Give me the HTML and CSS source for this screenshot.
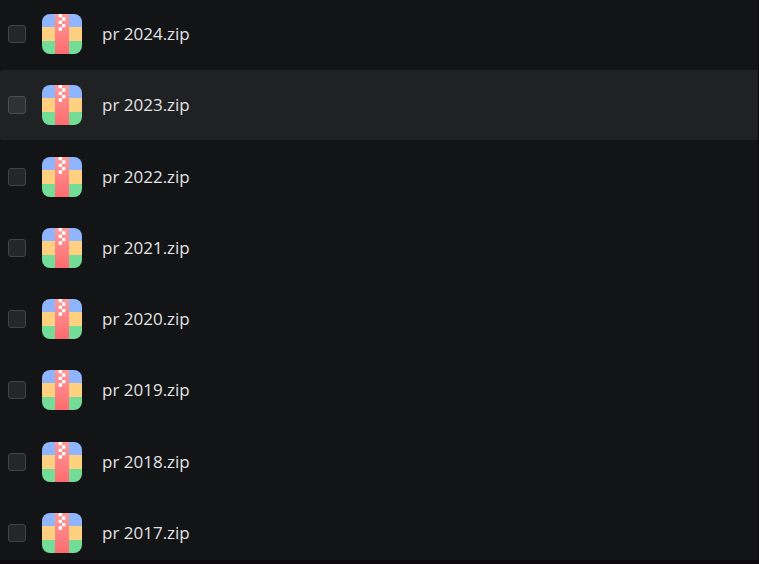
FILE: index.html
```
<!DOCTYPE html>
<html lang="en">
<head>
<meta charset="utf-8">
<title>Files</title>
<link rel="stylesheet" href="styles.css">
</head>
<body>
<svg class="sprite" aria-hidden="true">
  <defs>
    <linearGradient id="zip-band" x1="0" y1="0" x2="0" y2="1">
      <stop offset="0" stop-color="#ff9a9a"/>
      <stop offset="1" stop-color="#ff6b6e"/>
    </linearGradient>
    <clipPath id="zip-clip"><rect width="120" height="120" rx="24"/></clipPath>
  </defs>
  <symbol id="zip" viewBox="0 0 120 120">
    <g clip-path="url(#zip-clip)">
      <path fill="#8fb5ff" d="M0 0h120v40H0z"/>
      <path fill="#ffd080" d="M0 39h120v42H0z"/>
      <path fill="#73dc97" d="M0 81h120v39H0z"/>
      <path fill="url(#zip-band)" d="M39 0h42v120H39z"/>
      <path fill="#fff" d="M50 0h10v10H50zM60 10h10v10H60zM50 20h10v10H50zM60 30h10v10H60zM50 40h10v10H50z"/>
    </g>
  </symbol>
</svg>
<main class="panel">
  <ul class="files">
    <li class="file"><input class="check" type="checkbox" id="f2024"><label class="name" for="f2024"><svg class="icon" aria-hidden="true"><use href="#zip"/></svg>pr 2024.zip</label></li>
    <li class="file active"><input class="check" type="checkbox" id="f2023"><label class="name" for="f2023"><svg class="icon" aria-hidden="true"><use href="#zip"/></svg>pr 2023.zip</label></li>
    <li class="file"><input class="check" type="checkbox" id="f2022"><label class="name" for="f2022"><svg class="icon" aria-hidden="true"><use href="#zip"/></svg>pr 2022.zip</label></li>
    <li class="file"><input class="check" type="checkbox" id="f2021"><label class="name" for="f2021"><svg class="icon" aria-hidden="true"><use href="#zip"/></svg>pr 2021.zip</label></li>
    <li class="file"><input class="check" type="checkbox" id="f2020"><label class="name" for="f2020"><svg class="icon" aria-hidden="true"><use href="#zip"/></svg>pr 2020.zip</label></li>
    <li class="file"><input class="check" type="checkbox" id="f2019"><label class="name" for="f2019"><svg class="icon" aria-hidden="true"><use href="#zip"/></svg>pr 2019.zip</label></li>
    <li class="file"><input class="check" type="checkbox" id="f2018"><label class="name" for="f2018"><svg class="icon" aria-hidden="true"><use href="#zip"/></svg>pr 2018.zip</label></li>
    <li class="file"><input class="check" type="checkbox" id="f2017"><label class="name" for="f2017"><svg class="icon" aria-hidden="true"><use href="#zip"/></svg>pr 2017.zip</label></li>
  </ul>
</main>
</body>
</html>
```
FILE: styles.css
```
* { box-sizing: border-box; }

body {
  margin: 0;
  height: 100vh;
  overflow: hidden;
  background: #0e090d;
  color: #e2e2e2;
  font: 17px/24px "Open Sans", "Noto Sans", sans-serif;
}

.sprite {
  position: absolute;
  width: 0;
  height: 0;
}

.panel {
  height: calc(100vh - 4px);
  overflow: hidden;
  margin-right: 1px;
  background: #131416;
}

.files {
  display: flex;
  flex-direction: column;
  gap: 1px;
  margin: -1px 0 0;
  padding: 0;
  list-style: none;
}

.file {
  display: flex;
  flex: none;
  align-items: center;
  gap: 16px;
  height: 70px;
  padding: 0 8px;
}

/* Spreads the remainder of the row pitch over the list */
.file:nth-child(4n + 3) { margin-top: 1px; }

.active {
  background: #202123;
  border-radius: 2px 0 0 2px;
}

.check {
  appearance: none;
  flex: none;
  width: 18px;
  height: 18px;
  margin: 0;
  border: 1px solid #424344;
  border-radius: 3px;
  background: #252628;
}

.active .check {
  border-color: #4c4d4f;
  background: #303133;
}

.name {
  display: flex;
  flex: 1;
  align-items: center;
  gap: 20px;
}

.icon {
  flex: none;
  width: 40px;
  height: 40px;
}
```
